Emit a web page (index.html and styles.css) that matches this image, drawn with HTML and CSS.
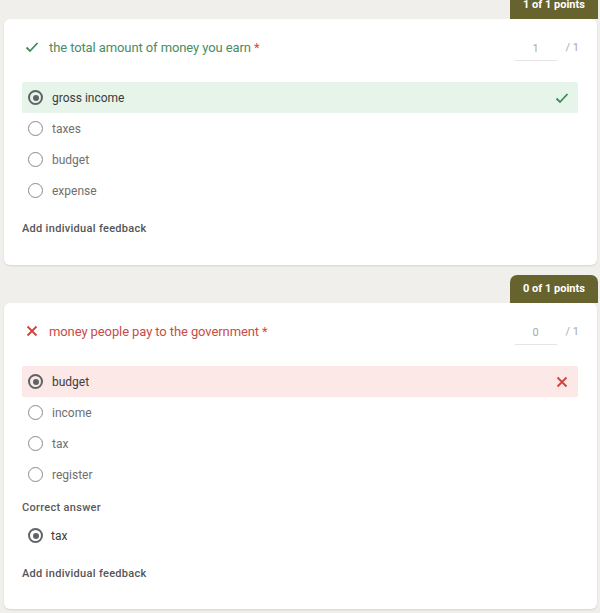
FILE: index.html
```html
<!DOCTYPE html>
<html>
<head>
<meta charset="utf-8">
<link rel="stylesheet" href="styles.css">
</head>
<body>
<div class="page">
  <section class="question first">
    <div class="badge">1 of 1 points</div>
    <div class="card">
      <div class="qhead">
        <svg class="qicon" width="14" height="14" viewBox="0 0 14 14"><path d="M1.5 7.5 L5 11 L12.5 3" fill="none" stroke="#3d8a5a" stroke-width="1.8"/></svg>
        <div class="qtitle correct">the total amount of money you earn <span class="req">*</span></div>
        <div class="score"><span class="scorebox">1</span><span class="outof">/ 1</span></div>
      </div>
      <div class="options">
        <div class="opt sel-ok"><span class="radio on"></span><span class="label">gross income</span>
          <svg class="mark" width="14" height="14" viewBox="0 0 14 14"><path d="M1.5 7.5 L5 11 L12.5 3" fill="none" stroke="#3d8a5a" stroke-width="1.8"/></svg>
        </div>
        <div class="opt"><span class="radio"></span><span class="label">taxes</span></div>
        <div class="opt"><span class="radio"></span><span class="label">budget</span></div>
        <div class="opt"><span class="radio"></span><span class="label">expense</span></div>
      </div>
      <div class="feedback">Add individual feedback</div>
    </div>
  </section>
  <section class="question">
    <div class="badge">0 of 1 points</div>
    <div class="card">
      <div class="qhead">
        <svg class="qicon" width="14" height="14" viewBox="0 0 14 14"><path d="M2.5 2.5 L11.5 11.5 M11.5 2.5 L2.5 11.5" fill="none" stroke="#d0433d" stroke-width="1.8"/></svg>
        <div class="qtitle wrong">money people pay to the government <span class="req">*</span></div>
        <div class="score"><span class="scorebox">0</span><span class="outof">/ 1</span></div>
      </div>
      <div class="options">
        <div class="opt sel-bad"><span class="radio on"></span><span class="label">budget</span>
          <svg class="mark" width="14" height="14" viewBox="0 0 14 14"><path d="M2.5 2.5 L11.5 11.5 M11.5 2.5 L2.5 11.5" fill="none" stroke="#d0433d" stroke-width="1.8"/></svg>
        </div>
        <div class="opt"><span class="radio"></span><span class="label">income</span></div>
        <div class="opt"><span class="radio"></span><span class="label">tax</span></div>
        <div class="opt"><span class="radio"></span><span class="label">register</span></div>
      </div>
      <div class="correct-title">Correct answer</div>
      <div class="opt answer"><span class="radio on"></span><span class="label">tax</span></div>
      <div class="feedback fb2">Add individual feedback</div>
    </div>
  </section>
</div>
</body>
</html>
```

FILE: styles.css
```css
* { box-sizing: border-box; }
html, body { margin: 0; padding: 0; }
body {
  background: #f0efec;
  font-family: Roboto, "Noto Sans", sans-serif;
  color: #555;
  width: 600px;
  height: 613px;
  overflow: hidden;
}
.page {
  display: flex;
  flex-direction: column;
  padding: 0 3px 0 4px;
  margin-top: -8px;
}
.question { display: flex; flex-direction: column; }
.question + .question { margin-top: 10px; }
.badge {
  align-self: flex-end;
  background: #67632f;
  color: #fff;
  font-size: 11px;
  font-weight: 700;
  height: 28px;
  line-height: 28px;
  width: 88px;
  text-align: center;
  border-radius: 7px 7px 0 0;
  margin-right: -1px;
}
.question.first .badge { height: 27px; line-height: 26px; }
.card {
  background: #fff;
  border-radius: 6px;
  box-shadow: 0 1px 2px rgba(0,0,0,0.12);
  padding: 0 19px 0 18px;
  display: flex;
  flex-direction: column;
}
.qhead {
  display: flex;
  align-items: center;
  height: 56px;
  padding-left: 3px;
}
.qicon { flex: none; }
.qtitle {
  font-size: 13px;
  margin-left: 10px;
  flex: 1;
  letter-spacing: -0.1px;
}
.qtitle.correct { color: #4a8c63; }
.qtitle.wrong { color: #c94c47; }
.req { color: #d9473d; }
.score {
  display: flex;
  align-items: center;
  font-size: 11px;
  color: #aaa;
}
.scorebox {
  width: 42px;
  text-align: center;
  border-bottom: 1px solid #e4e4e4;
  padding: 4px 0 5px;
  margin-top: 4px;
}
.outof { margin-left: 9px; margin-right: -1px; }
.options { margin-top: 7px; display: flex; flex-direction: column; }
.opt {
  display: flex;
  align-items: center;
  height: 31px;
  padding-left: 6px;
  padding-right: 9px;
  font-size: 12px;
  color: #6f6f6f;
}
.opt .label { margin-left: 9px; flex: 1; }
.sel-ok { background: #e6f4ea; color: #3c3c3c; border-radius: 2px; }
.sel-bad { background: #fce8e6; color: #3c3c3c; border-radius: 2px; }
.radio {
  width: 15px;
  height: 15px;
  border: 1.6px solid #8a8a8a;
  border-radius: 50%;
  flex: none;
  position: relative;
}
.radio.on { border: 2px solid #5f6368; }
.radio.on::after {
  content: "";
  position: absolute;
  left: 2.5px; top: 2.5px;
  width: 6px; height: 6px;
  border-radius: 50%;
  background: #5f6368;
}
.feedback {
  font-size: 11px;
  font-weight: 500;
  letter-spacing: 0.3px;
  color: #555;
  margin-top: 16px;
  height: 14px;
  line-height: 14px;
  margin-bottom: 29px;
}
.correct-title {
  font-size: 11px;
  font-weight: 500;
  letter-spacing: 0.3px;
  color: #5a5a5a;
  margin-top: 11px;
  height: 14px;
  line-height: 14px;
}
.answer { margin-top: 5px; color: #3c3c3c; }
.answer .label { margin-left: 8px; }
.fb2 { margin-top: 16px; margin-bottom: 28px; }
```
